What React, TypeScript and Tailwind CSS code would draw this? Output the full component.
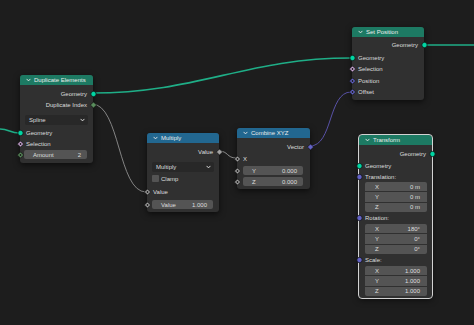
import React from 'react';

// Blender-like geometry node editor, small canvas
type SocketKind = 'circle' | 'diamond' | 'dot';

const GEO = '#00d6a3';
const VAL = '#a1a1a1';
const INT = '#598c5c';
const BOOL = '#cca6d6';
const VEC = '#6363c7';

const Socket: React.FC<{ kind: SocketKind; color: string; side: 'left' | 'right' }> = ({ kind, color, side }) => (
  <svg
    width="7"
    height="7"
    viewBox="0 0 7 7"
    className={`absolute top-1/2 -translate-y-1/2 ${side === 'left' ? 'left-[-3.5px]' : 'right-[-3.5px]'}`}
  >
    {kind === 'circle' ? (
      <circle cx="3.5" cy="3.5" r="2.7" fill={color} stroke="#111" strokeWidth="0.8" />
    ) : (
      <polygon points="3.5,0.4 6.6,3.5 3.5,6.6 0.4,3.5" fill={color} stroke="#111" strokeWidth="0.7" />
    )}
    {kind === 'dot' && <circle cx="3.5" cy="3.5" r="0.9" fill="#1a1a1a" />}
  </svg>
);

const Chevron: React.FC = () => (
  <svg width="5" height="4" viewBox="0 0 5 4" className="shrink-0">
    <path d="M0.6 0.9 L2.5 2.9 L4.4 0.9" fill="none" stroke="#e8e8e8" strokeWidth="0.9" />
  </svg>
);

interface NodeProps {
  title: string;
  left: number;
  top: number;
  width: number;
  header: string;
  selected?: boolean;
  children: React.ReactNode;
}

const Node: React.FC<NodeProps> = ({ title, left, top, width, header, selected, children }) => (
  <div
    className={`absolute rounded-[3px] bg-[#303030] shadow-[0_2px_6px_rgba(0,0,0,0.6)] ${
      selected ? 'outline outline-1 outline-[#d2d2d2]' : ''
    }`}
    style={{ left, top, width }}
  >
    <div className="flex h-[10px] items-center gap-[3px] rounded-t-[3px] pl-[6px]" style={{ backgroundColor: header }}>
      <Chevron />
      <span className="text-[#ececec]">{title}</span>
    </div>
    {children}
  </div>
);

const Out: React.FC<{ label: string; kind: SocketKind; color: string; mt?: string }> = ({ label, kind, color, mt = '' }) => (
  <div className={`relative flex h-[11px] items-center justify-end pr-[6px] ${mt}`}>
    <span>{label}</span>
    <Socket kind={kind} color={color} side="right" />
  </div>
);

const In: React.FC<{ label: string; kind: SocketKind; color: string; mt?: string }> = ({ label, kind, color, mt = '' }) => (
  <div className={`relative flex h-[11px] items-center pl-[6px] ${mt}`}>
    <span>{label}</span>
    <Socket kind={kind} color={color} side="left" />
  </div>
);

const Field: React.FC<{ label: string; value: string; kind: SocketKind; color: string; mt?: string; px?: string }> = ({
  label,
  value,
  kind,
  color,
  mt = '',
  px = 'pl-[5px] pr-[6px]',
}) => (
  <div className={`relative flex h-[11px] items-center ${px} ${mt}`}>
    <div className="flex h-[9px] flex-1 items-center justify-between rounded-[2px] bg-[#545454] pl-[9px] pr-[6px]">
      <span>{label}</span>
      <span>{value}</span>
    </div>
    <Socket kind={kind} color={color} side="left" />
  </div>
);

const Dropdown: React.FC<{ text: string; mt?: string }> = ({ text, mt = '' }) => (
  <div className={`flex h-[11px] items-center px-[5px] ${mt}`}>
    <div className="flex h-[10px] flex-1 items-center justify-between rounded-[2px] bg-[#282828] pl-[4px] pr-[3px]">
      <span>{text}</span>
      <Chevron />
    </div>
  </div>
);

const Group: React.FC<{ rows: [string, string][] }> = ({ rows }) => (
  <div className="ml-[6px] mr-[5px] flex flex-col gap-px overflow-hidden rounded-[2px]">
    {rows.map(([l, v]) => (
      <div key={l} className="flex h-[9.33px] items-center justify-between bg-[#545454] pl-[10px] pr-[7px]">
        <span>{l}</span>
        <span>{v}</span>
      </div>
    ))}
  </div>
);

const App: React.FC = () => {
  return (
    <div
      className="relative h-[325px] w-[474px] overflow-hidden bg-[#1d1d1d] text-[6px] leading-none text-[#dedede]"
      style={{ fontFamily: '"Liberation Sans", Arial, sans-serif' }}
    >
      <svg width="474" height="325" className="absolute left-0 top-0" fill="none">
        <path d="M0 129 C9 129 10 133 19 133" stroke="#1fae87" strokeWidth="1.6" />
        <path d="M92 93 C200 93 245 58 351 58" stroke="#1fae87" strokeWidth="1.6" />
        <path d="M424 45 L474 45" stroke="#1fae87" strokeWidth="1.6" />
        <path d="M92 104 C120 104 118 192 146 192" stroke="#8f8f8f" strokeWidth="0.9" />
        <path d="M219 151 C228 151 227 158 236 158" stroke="#9a9a9a" strokeWidth="0.9" />
        <path d="M310 146 C333 146 328 92 351 92" stroke="#5f57b5" strokeWidth="0.9" />
      </svg>

      <Node title="Duplicate Elements" left={20} top={75} width={73} header="#1d7a63">
        <Out label="Geometry" kind="circle" color={GEO} mt="mt-[3px]" />
        <Out label="Duplicate Index" kind="diamond" color={INT} />
        <Dropdown text="Spline" mt="mt-[4px]" />
        <In label="Geometry" kind="circle" color={GEO} mt="mt-[2px]" />
        <In label="Selection" kind="dot" color={BOOL} />
        <Field label="Amount" value="2" kind="dot" color={INT} px="pl-[4px] pr-[6px]" />
        <div className="h-[3px]" />
      </Node>

      <Node title="Multiply" left={147} top={133} width={72} header="#226790">
        <Out label="Value" kind="diamond" color={VAL} mt="mt-[3px]" />
        <Dropdown text="Multiply" mt="mt-[4px]" />
        <div className="mt-px flex h-[11px] items-center gap-[2px] pl-[5px]">
          <div className="h-[7px] w-[7px] rounded-[1px] bg-[#545454]" />
          <span>Clamp</span>
        </div>
        <In label="Value" kind="dot" color={VAL} mt="mt-[2px]" />
        <Field label="Value" value="1.000" kind="dot" color={VAL} mt="mt-[2px]" />
        <div className="h-[2px]" />
      </Node>

      <Node title="Combine XYZ" left={237} top={128} width={73} header="#226790">
        <Out label="Vector" kind="diamond" color={VEC} mt="mt-[3px]" />
        <In label="X" kind="dot" color={VAL} mt="mt-px" />
        <Field label="Y" value="0.000" kind="dot" color={VAL} mt="mt-px" px="pl-[6px] pr-[7px]" />
        <Field label="Z" value="0.000" kind="dot" color={VAL} px="pl-[6px] pr-[7px]" />
        <div className="h-[2px]" />
      </Node>

      <Node title="Set Position" left={352} top={27} width={72} header="#1d7a63">
        <Out label="Geometry" kind="circle" color={GEO} mt="mt-[2px]" />
        <In label="Geometry" kind="circle" color={GEO} mt="mt-[2px]" />
        <In label="Selection" kind="dot" color={BOOL} />
        <In label="Position" kind="dot" color={VEC} mt="mt-px" />
        <In label="Offset" kind="dot" color={VEC} />
        <div className="h-[3px]" />
      </Node>

      <Node title="Transform" left={359} top={135} width={73} header="#1d7a63" selected>
        <Out label="Geometry" kind="circle" color={GEO} mt="mt-[3px]" />
        <In label="Geometry" kind="circle" color={GEO} mt="mt-px" />
        <In label="Translation:" kind="circle" color={VEC} />
        <Group rows={[['X', '0 m'], ['Y', '0 m'], ['Z', '0 m']]} />
        <In label="Rotation:" kind="circle" color={VEC} mt="mt-px" />
        <Group rows={[['X', '180°'], ['Y', '0°'], ['Z', '0°']]} />
        <In label="Scale:" kind="circle" color={VEC} mt="mt-px" />
        <Group rows={[['X', '1.000'], ['Y', '1.000'], ['Z', '1.000']]} />
        <div className="h-[2px]" />
      </Node>
    </div>
  );
};

export default App;
